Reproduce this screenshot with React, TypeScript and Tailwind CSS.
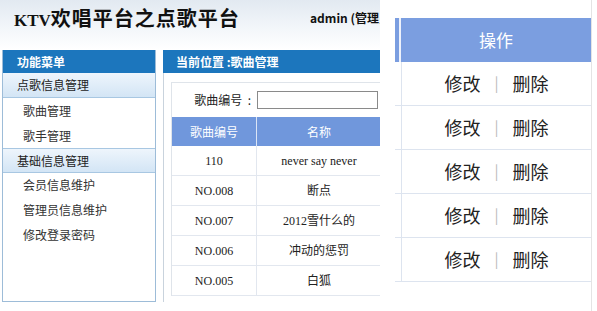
import React from "react";

const cjk = '"Noto Sans CJK SC", "Noto Sans", sans-serif';
const serif = '"Liberation Serif", "Noto Sans CJK SC", serif';

const rows = [
  { id: "110", name: "never say never" },
  { id: "NO.008", name: "断点" },
  { id: "NO.007", name: "2012雪什么的" },
  { id: "NO.006", name: "冲动的惩罚" },
  { id: "NO.005", name: "白狐" },
];

function Sidebar() {
  return (
    <div className="ml-[2px] w-[154px] shrink-0 h-[252px] border border-[#9dbcd8] border-t-0 flex flex-col">
      <div className="h-[23px] bg-[#1c76bd] text-white font-bold text-[12px] leading-[23px] pl-[14px]">
        功能菜单
      </div>
      <div className="h-[25px] bg-gradient-to-b from-[#eef5fc] to-[#d3e5f5] border-b border-[#a8c7e2] text-[12px] text-[#222] leading-[24px] pl-[14px]">
        点歌信息管理
      </div>
      <div className="h-[25px] text-[12px] text-[#333] leading-[25px] pl-[20px]">歌曲管理</div>
      <div className="h-[25px] text-[12px] text-[#333] leading-[25px] pl-[20px]">歌手管理</div>
      <div className="h-[25px] bg-gradient-to-b from-[#eef5fc] to-[#d3e5f5] border-y border-[#a8c7e2] text-[12px] text-[#222] leading-[23px] pl-[14px]">
        基础信息管理
      </div>
      <div className="h-[24px] text-[12px] text-[#333] leading-[24px] pl-[20px]">会员信息维护</div>
      <div className="h-[25px] text-[12px] text-[#333] leading-[25px] pl-[20px]">管理员信息维护</div>
      <div className="h-[25px] text-[12px] text-[#333] leading-[25px] pl-[20px]">修改登录密码</div>
    </div>
  );
}

function Main() {
  return (
    <div className="ml-[7px] w-[240px] shrink-0 flex flex-col">
      <div className="h-[23px] bg-[#1c76bd] text-white font-bold text-[12px] leading-[23px] pl-[13px]">
        当前位置&nbsp;:歌曲管理
      </div>
      <div className="h-[229px] border-l border-[#c9d3dd] pt-[9px] pl-[7px]">
        <div className="border-l border-t border-[#dfe4ea] bg-white pt-[8px]">
          <div className="flex items-center h-[18px]">
            <div className="w-[85px] text-right text-[12px] text-[#222] pr-[6px]">
              歌曲编号&nbsp;&nbsp;:
            </div>
            <div className="w-[121px] h-[18px] border border-[#8a8a8a] bg-white" />
          </div>
          <div className="mt-[8px]">
            <div className="flex h-[29px] bg-[#7097dc] text-white text-[12px]">
              <div className="w-[85px] flex items-center justify-center border-r border-[#dbe5f6]">歌曲编号</div>
              <div className="w-[124px] flex items-center justify-center">名称</div>
            </div>
            {rows.map((r) => (
              <div key={r.id} className="flex h-[30px] border-b border-[#e2e7ef] text-[12px] text-[#222]">
                <div className="w-[85px] flex items-center justify-center border-r border-[#e2e7ef]" style={{ fontFamily: serif }}>
                  {r.id}
                </div>
                <div className="w-[124px] flex items-center justify-center" style={{ fontFamily: serif }}>
                  {r.name}
                </div>
              </div>
            ))}
          </div>
        </div>
      </div>
    </div>
  );
}

function LeftPage() {
  return (
    <div className="w-[380px] h-[311px] shrink-0 overflow-hidden flex flex-col bg-white">
      <div className="h-[50px] shrink-0 bg-gradient-to-b from-[#e2e9f1] via-[#f1f5f9] to-white flex items-start">
        <div className="ml-[14px] mt-[3px] font-bold text-[#111] whitespace-nowrap">
          <span className="text-[17px]" style={{ fontFamily: serif }}>KTV</span>
          <span className="text-[20px] tracking-[1px]">欢唱平台之点歌平台</span>
        </div>
        <div className="ml-auto mt-[9px] w-[70px] shrink-0 overflow-hidden">
          <div className="text-[12px] font-bold text-[#111] whitespace-nowrap">admin (管理员)</div>
        </div>
      </div>
      <div className="flex">
        <Sidebar />
        <Main />
      </div>
    </div>
  );
}

function RightPanel() {
  return (
    <div className="ml-[15px] w-[197px] h-[311px] shrink-0 border-r border-[#e4e4e4] pt-[18px]">
      <div className="flex h-[44px] bg-[#7b9ee0]">
        <div className="w-[6px] border-r-2 border-[#eef2fb]" />
        <div className="flex-1 flex items-center justify-center text-white text-[17px]">操作</div>
      </div>
      {[0, 1, 2, 3, 4].map((i) => (
        <div key={i} className="flex h-[44px] border-b border-[#dde4ef]">
          <div className="w-[7px] border-r border-[#dde4ef]" />
          <div className="flex-1 flex items-center justify-center text-[18px] text-[#222] gap-[14px]">
            <span>修改</span>
            <span className="text-[#bbb] text-[15px]">|</span>
            <span>删除</span>
          </div>
        </div>
      ))}
    </div>
  );
}

export default function App() {
  return (
    <div className="w-[597px] h-[311px] bg-white flex overflow-hidden" style={{ fontFamily: cjk }}>
      <LeftPage />
      <RightPanel />
    </div>
  );
}
